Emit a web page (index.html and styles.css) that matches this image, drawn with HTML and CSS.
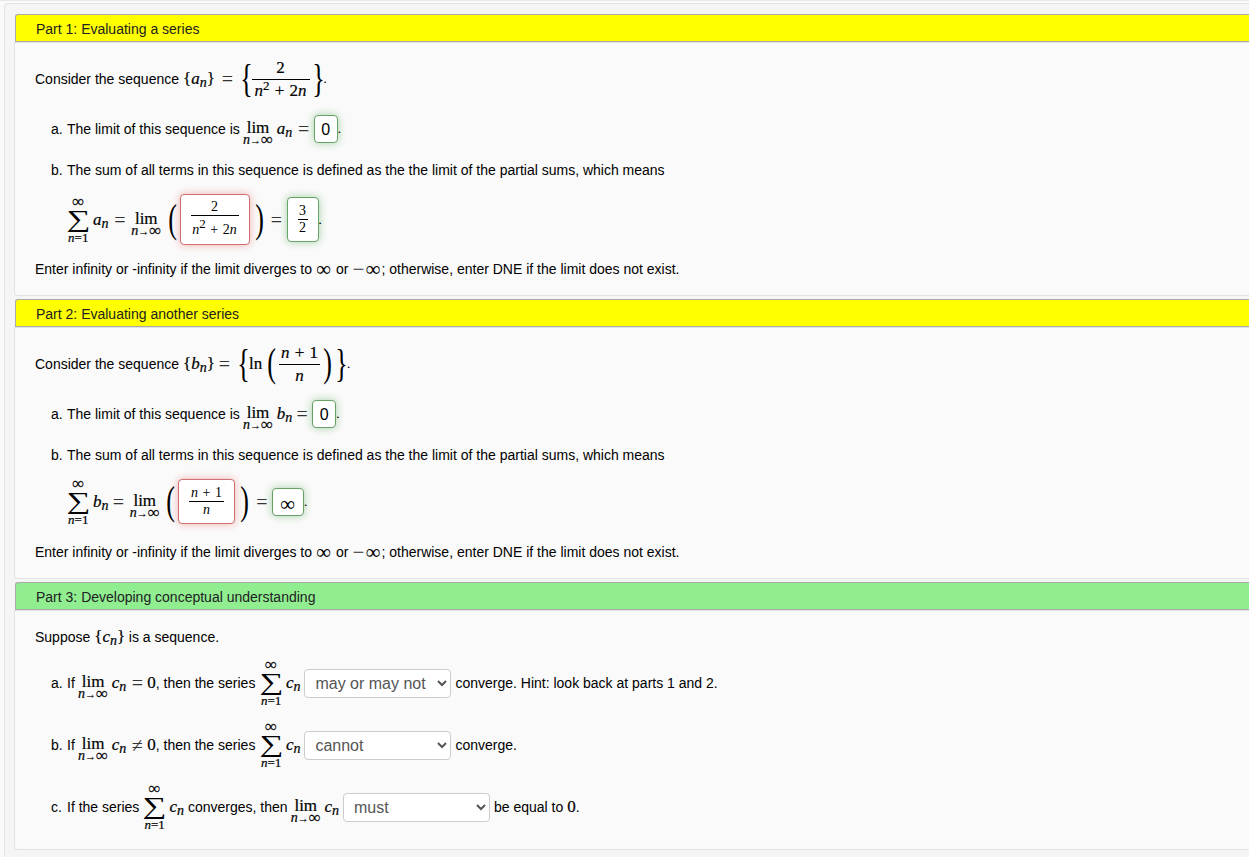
FILE: index.html
```html
<!DOCTYPE html>
<html lang="en">
  <head>
    <meta charset="utf-8" />
    <title>Series</title>
    <link rel="stylesheet" href="styles.css">
  </head>
  <body>
    <div class="topbar"></div>
    <div class="question">
      <h2 class="head partial">Part 1: Evaluating a series</h2>
      <div class="part part1">
        <div class="line intro">
          <span class="txt">Consider the sequence</span>
          <span class="math set set-a">{<i>a</i><i class="sub">n</i>}</span>
          <span class="math eq">=</span>
          <span class="math brace">{</span>
          <span class="math frac wide"><span>2</span><span class="den"><i>n</i><sup>2</sup> + 2<i>n</i></span></span>
          <span class="math brace">}</span>
          <span class="math dot">.</span>
        </div>
        <div class="line item limit">
          <span class="num">a.</span>
          <span class="txt">The limit of this sequence is</span>
          <span class="math lim"><span>lim</span><small><i>n</i><u>→</u><b>∞</b></small></span>
          <span class="math term term-a"><i>a</i><i class="sub">n</i></span>
          <span class="math eq">=</span>
          <span class="answer right zero">0</span><span class="math dot">.</span>
        </div>
        <div class="line item text">
          <span class="num">b.</span>
          <span class="txt">The sum of all terms in this sequence is defined as the the limit of the partial sums, which means</span>
        </div>
        <div class="line sumline">
          <span class="math sum"><small><b>∞</b></small><span class="sigma">∑</span><small><i>n</i>=1</small></span>
          <span class="math term term-a"><i>a</i><i class="sub">n</i></span>
          <span class="math eq">=</span>
          <span class="math lim"><span>lim</span><small><i>n</i><u>→</u><b>∞</b></small></span>
          <span class="math paren">(</span>
          <span class="answer wrong big"><span class="math frac"><span>2</span><span class="den"><i>n</i><sup>2</sup> + 2<i>n</i></span></span></span>
          <span class="math paren">)</span>
          <span class="math eq">=</span>
          <span class="answer right half"><span class="math frac"><span>3</span><span class="den">2</span></span></span><span class="math dot">.</span>
        </div>
        <div class="line text">
          <span class="txt">Enter infinity or -infinity if the limit diverges to</span>
          <span class="math inf">∞</span>
          <span class="txt">or</span>
          <span class="math minus">−</span><span class="math inf">∞</span><span class="txt tail">; otherwise, enter DNE if the limit does not exist.</span>
        </div>
      </div>

      <h2 class="head partial">Part 2: Evaluating another series</h2>
      <div class="part part2">
        <div class="line intro">
          <span class="txt">Consider the sequence</span>
          <span class="math set set-b">{<i>b</i><i class="sub">n</i>}</span>
          <span class="math eq">=</span>
          <span class="math brace">{</span>
          <span class="math ln">ln</span>
          <span class="math paren">(</span>
          <span class="math frac narrow"><span><i>n</i> + 1</span><span class="den"><i>n</i></span></span>
          <span class="math paren">)</span>
          <span class="math brace">}</span>
          <span class="math dot">.</span>
        </div>
        <div class="line item limit">
          <span class="num">a.</span>
          <span class="txt">The limit of this sequence is</span>
          <span class="math lim"><span>lim</span><small><i>n</i><u>→</u><b>∞</b></small></span>
          <span class="math term term-b"><i>b</i><i class="sub">n</i></span>
          <span class="math eq">=</span>
          <span class="answer right zero">0</span><span class="math dot">.</span>
        </div>
        <div class="line item text">
          <span class="num">b.</span>
          <span class="txt">The sum of all terms in this sequence is defined as the the limit of the partial sums, which means</span>
        </div>
        <div class="line sumline">
          <span class="math sum"><small><b>∞</b></small><span class="sigma">∑</span><small><i>n</i>=1</small></span>
          <span class="math term term-b"><i>b</i><i class="sub">n</i></span>
          <span class="math eq">=</span>
          <span class="math lim"><span>lim</span><small><i>n</i><u>→</u><b>∞</b></small></span>
          <span class="math paren">(</span>
          <span class="answer wrong mid"><span class="math frac"><span><i>n</i> + 1</span><span class="den"><i>n</i></span></span></span>
          <span class="math paren">)</span>
          <span class="math eq">=</span>
          <span class="answer right infbox"><span class="math inf">∞</span></span><span class="math dot">.</span>
        </div>
        <div class="line text">
          <span class="txt">Enter infinity or -infinity if the limit diverges to</span>
          <span class="math inf">∞</span>
          <span class="txt">or</span>
          <span class="math minus">−</span><span class="math inf">∞</span><span class="txt tail">; otherwise, enter DNE if the limit does not exist.</span>
        </div>
      </div>

      <h2 class="head correct">Part 3: Developing conceptual understanding</h2>
      <div class="part part3">
        <div class="line text">
          <span class="txt">Suppose</span>
          <span class="math set set-c">{<i>c</i><i class="sub">n</i>}</span>
          <span class="txt">is a sequence.</span>
        </div>
        <div class="line item choice">
          <span class="num">a.</span>
          <span class="txt">If</span>
          <span class="math lim"><span>lim</span><small><i>n</i><u>→</u><b>∞</b></small></span>
          <span class="math term term-c"><i>c</i><i class="sub">n</i></span>
          <span class="math eq">=</span>
          <span class="math">0</span><span class="txt tail">, then the series</span>
          <span class="math sum"><small><b>∞</b></small><span class="sigma">∑</span><small><i>n</i>=1</small></span>
          <span class="math term term-c"><i>c</i><i class="sub">n</i></span>
          <select><option>may or may not</option></select>
          <span class="txt">converge. Hint: look back at parts 1 and 2.</span>
        </div>
        <div class="line item choice">
          <span class="num">b.</span>
          <span class="txt">If</span>
          <span class="math lim"><span>lim</span><small><i>n</i><u>→</u><b>∞</b></small></span>
          <span class="math term term-c"><i>c</i><i class="sub">n</i></span>
          <span class="math eq">≠</span>
          <span class="math">0</span><span class="txt tail">, then the series</span>
          <span class="math sum"><small><b>∞</b></small><span class="sigma">∑</span><small><i>n</i>=1</small></span>
          <span class="math term term-c"><i>c</i><i class="sub">n</i></span>
          <select><option>cannot</option></select>
          <span class="txt">converge.</span>
        </div>
        <div class="line item choice">
          <span class="num">c.</span>
          <span class="txt">If the series</span>
          <span class="math sum"><small><b>∞</b></small><span class="sigma">∑</span><small><i>n</i>=1</small></span>
          <span class="math term term-c"><i>c</i><i class="sub">n</i></span>
          <span class="txt">converges, then</span>
          <span class="math lim"><span>lim</span><small><i>n</i><u>→</u><b>∞</b></small></span>
          <span class="math term term-c"><i>c</i><i class="sub">n</i></span>
          <select><option>must</option></select>
          <span class="txt">be equal to <span class="math">0</span>.</span>
        </div>
      </div>
    </div>
  </body>
</html>
```

FILE: styles.css
```css
* {
  box-sizing: border-box;
}
body {
  margin: 0;
  height: 857px;
  overflow: hidden;
  background: #fafafa;
  color: #000;
  font: 14px/20px "Liberation Sans", Arial, sans-serif;
}
.topbar {
  height: 3px;
  border-top: 1px solid #e8e8e8;
}
.question {
  height: 854px;
  margin-left: 4px;
  padding: 10px 0 0 10px;
  border: 1px solid #e3e3e3;
  border-width: 1px 0 0 1px;
  border-top-left-radius: 4px;
  background: #f5f5f5;
}

/* part headers */
.head {
  height: 28px;
  margin: 0;
  padding: 0 20px;
  border: 1px solid #aaa;
  border-right: 0;
  border-top-left-radius: 3px;
  font-size: 14px;
  font-weight: normal;
  line-height: 28px;
  color: #222;
}
.partial {
  background: #ff0;
}
.correct {
  background: #90ee90;
}
.part {
  margin: 0 0 3px -1px;
  padding-left: 20px;
  border: 1px solid #e3e3e3;
  border-right: 0;
  border-bottom-left-radius: 4px;
  background: #fafafa;
}
.part1 { height: 254px; }
.part2 { height: 252px; }
.part3 { height: 240px; }

/* rows */
.line {
  display: flex;
  align-items: center;
  white-space: nowrap;
}
.line > * { flex: none; }
.intro { height: 72px; }
.limit { height: 28px; }
.text { height: 54px; }
.item { padding-left: 16px; }
.sumline {
  height: 45px;
  padding-left: 32px;
}
.part2 .sumline { height: 39px; }
.part2 .sumline + .text { height: 62px; }
.part3 .text { height: 52px; }
.choice {
  height: 40px;
  margin-bottom: 22px;
}
.num { width: 16px; }
.txt { margin-right: 4px; }
.math + .txt, select + .txt { margin-left: 4px; }
.math + .tail { margin-left: 0; }
.tail { margin-right: 4.5px; }
.term + .txt { margin-left: 3px; }

/* math */
.math {
  font-family: "Liberation Serif", "Times New Roman", serif;
  font-size: 17px;
  line-height: 20px;
  -webkit-text-stroke: 0.2px;
}
.math b { font-weight: normal; }
.math u { text-decoration: none; }
.sub {
  font-size: 14px;
  line-height: 0;
  vertical-align: -3px;
}
.set-a { width: 34.5px; }
.set-b { width: 31.5px; }
.set-c { width: 30.5px; }
.term { margin-left: 3.5px; }
.term-a { width: 17px; }
.term-b { width: 15.5px; }
.term-c { width: 15.5px; }
.term + select { margin-left: 3px; }
.eq {
  width: 20px;
  font-size: 20px;
  text-align: center;
  color: #333;
  -webkit-text-stroke: 0;
}
.ln { width: 17.5px; padding-left: 1.5px; }
.dot { margin-left: 0; font-size: 13px; }
.brace + .dot { margin-left: 1px; }
.inf {
  width: 16px;
  font-size: 21px;
  -webkit-text-stroke: 0;
}
.minus {
  width: 13px;
  font-size: 21px;
  color: #333;
  -webkit-text-stroke: 0;
}
.lim, .sum, .frac {
  display: flex;
  flex-direction: column;
  align-items: center;
}
.lim {
  width: 30.5px;
  height: 20px;
  padding-top: 2px;
  line-height: 14px;
}
.txt + .lim { margin-left: -1px; }
.sumline .lim { margin-left: 1px; }
.lim small {
  display: flex;
  align-items: center;
  height: 10px;
  font-size: 14px;
  line-height: 10px;
}
.lim u { font-size: 11px; }
small b { font-size: 17px; }
.sum { width: 22.5px; }
.sum small {
  height: 12px;
  font-size: 13px;
  line-height: 12px;
}
.sigma {
  height: 24px;
  font-size: 24px;
  line-height: 22px;
  transform: scaleX(1.4);
  -webkit-text-stroke: 0;
}
.brace, .paren {
  width: 13px;
  font-size: 40px;
  line-height: 38px;
  text-align: center;
  transform: scaleX(0.65);
  -webkit-text-stroke: 0;
}
.paren { padding-bottom: 2px; }
.lim + .paren { margin-left: 4px; }

/* fractions */
.frac { line-height: 22px; }
.frac sup {
  font-size: 13px;
  line-height: 0;
  vertical-align: 6px;
}
.den {
  align-self: stretch;
  border-top: 1px solid #000;
  text-align: center;
}
.wide {
  width: 58px;
  margin: 0 0 0 1px;
  word-spacing: 1px;
}
.narrow {
  width: 41px;
  margin: 0 1px;
  word-spacing: 1px;
}
.paren + .brace { margin-left: -1px; }
.answer {
  display: flex;
  align-items: center;
  justify-content: center;
  border: 1px solid;
  border-radius: 4px;
  background: #fff;
}
.answer .frac {
  font-size: 14px;
  line-height: 16px;
  -webkit-text-stroke: 0;
}
.right {
  border-color: #66a366;
  box-shadow: 0 0 8px #a6cfa6;
}
.wrong {
  margin: 0 3px 0 1px;
  border-color: #cf6f6f;
  box-shadow: 0 0 8px #f0b0b0;
}
.wrong + .paren + .eq { margin-left: 1px; }
.zero {
  width: 24px;
  height: 28px;
  padding-top: 2px;
  font-size: 16px;
}
.big {
  width: 70px;
  height: 51px;
}
.big .frac {
  width: 48px;
  word-spacing: 1px;
}
.big .den { padding-top: 4px; line-height: 20px; }
.mid {
  width: 57px;
  height: 45px;
}
.mid .frac { width: 35px; word-spacing: 1px; }
.half {
  width: 32px;
  height: 45px;
}
.half .frac { width: 10px; }
.infbox {
  width: 32px;
  height: 28px;
  padding-top: 4px;
}
select {
  width: 147px;
  height: 29px;
  border: 1px solid #ccc;
  border-radius: 4px;
  background: #fff;
  color: #555;
  font: 16px "Liberation Sans", Arial, sans-serif;
  padding: 0 6px;
}
```
